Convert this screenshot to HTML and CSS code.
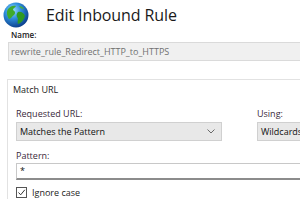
FILE: index.html
```html
<!DOCTYPE html>
<html lang="en">
<head>
    <meta charset="UTF-8">
    <meta name="viewport" content="width=device-width, initial-scale=1.0">
    <title>Edit Inbound Rule</title>
    <link rel="stylesheet" href="styles.css">
</head>
<body>
    <div class="header">
        <svg class="globe" width="26" height="26" viewBox="0 0 26 26">
            <defs>
                <radialGradient id="sea" cx="0.38" cy="0.32" r="0.7">
                    <stop offset="0" stop-color="#9fe0ff"/>
                    <stop offset="0.45" stop-color="#2f8fdc"/>
                    <stop offset="1" stop-color="#0b3f8c"/>
                </radialGradient>
            </defs>
            <circle cx="13" cy="13" r="12.5" fill="url(#sea)"/>
            <path d="M5 7 C7 4 11 3 13 4 C12 6 10 6 10 8 C12 9 13 11 11 13 C9 14 8 17 6 17 C4 14 3 10 5 7 Z" fill="#3faa2c"/>
            <path d="M15 10 C18 9 21 11 22 14 C21 18 18 21 15 22 C14 19 16 17 14 15 C13 13 14 11 15 10 Z" fill="#2e9a22"/>
            <path d="M16 4 C18 4 20 5 21 7 C19 7 17 6 16 4 Z" fill="#48b234"/>
        </svg>
        <h1>Edit Inbound Rule</h1>
    </div>

    <div class="f-group">
        <label class="small-label">Name:</label>
        <div class="name-box">rewrite_rule_Redirect_HTTP_to_HTTPS</div>
    </div>

    <div class="groupbox">
        <div class="group-title">Match URL</div>
        <div class="row">
            <div class="col-url">
                <label>Requested URL:</label>
                <div class="select">
                    <span>Matches the Pattern</span>
                    <svg width="8" height="5" viewBox="0 0 8 5"><path d="M0.5 0.5 L4 4 L7.5 0.5" fill="none" stroke="#6a6a6a" stroke-width="1"/></svg>
                </div>
            </div>
            <div class="col-using">
                <label>Using:</label>
                <div class="select">
                    <span>Wildcards</span>
                </div>
            </div>
        </div>
        <div class="pattern">
            <label>Pattern:</label>
            <div class="textbox">*</div>
        </div>
        <div class="check">
            <span class="box">
                <svg width="9" height="9" viewBox="0 0 9 9"><path d="M1.5 4.5 L3.7 6.8 L7.8 1.8" fill="none" stroke="#333" stroke-width="1"/></svg>
            </span>
            <span>Ignore case</span>
        </div>
    </div>
</body>
</html>
```

FILE: styles.css
```css
body {
    margin: 0;
    background-color: #ffffff;
    font-family: "Open Sans", "Noto Sans", sans-serif;
    font-size: 9px;
    color: #222;
    overflow: hidden;
}
.header {
    display: flex;
    align-items: center;
    padding: 1px 0 0 3px;
    height: 28px;
}
.globe {
    flex: none;
}
h1 {
    margin: 0 0 0 17px;
    font-size: 16px;
    font-weight: 400;
    color: #1a1a1a;
    letter-spacing: -0.1px;
}
.f-group {
    margin-left: 8px;
}
.small-label {
    display: block;
    margin-left: 3px;
    font-size: 8px;
    font-weight: 600;
    line-height: 12px;
    color: #222;
}
.name-box {
    margin-top: 1px;
    height: 17px;
    line-height: 17px;
    padding-left: 2px;
    border: 1px solid #dadada;
    border-right: none;
    background-color: #f0f0f0;
    color: #707070;
    white-space: nowrap;
}
.groupbox {
    margin: 18px 0 0 7px;
    border-top: 1px solid #e2e2e2;
    border-left: 1px solid #e2e2e2;
    padding: 3px 0 0 8px;
}
.group-title {
    margin-left: -3px;
    line-height: 14px;
    color: #222;
}
.row {
    display: flex;
    margin-top: 11px;
}
label {
    display: block;
    line-height: 12px;
    color: #3a2a3a;
}
.col-url {
    width: 206px;
    flex: none;
}
.col-using {
    margin-left: 35px;
    flex: 1;
}
.select {
    display: flex;
    align-items: center;
    justify-content: space-between;
    margin-top: 2px;
    height: 17px;
    padding: 0 6px 0 3px;
    border: 1px solid #d0d0d0;
    background-color: #e8e8e8;
    color: #111;
    white-space: nowrap;
}
.col-using .select {
    border-right: none;
}
.pattern {
    margin-top: 9px;
}
.textbox {
    margin-top: 1px;
    height: 14px;
    line-height: 14px;
    padding-left: 3px;
    border-top: 1px solid #c8c8c8;
    border-left: 1px solid #c8c8c8;
    border-bottom: 2px solid #8c8c8c;
    background-color: #fff;
    color: #111;
}
.check {
    display: flex;
    align-items: center;
    margin-top: 6px;
    gap: 5px;
}
.box {
    display: flex;
    align-items: center;
    justify-content: center;
    width: 9px;
    height: 9px;
    border: 1px solid #555;
}
```
